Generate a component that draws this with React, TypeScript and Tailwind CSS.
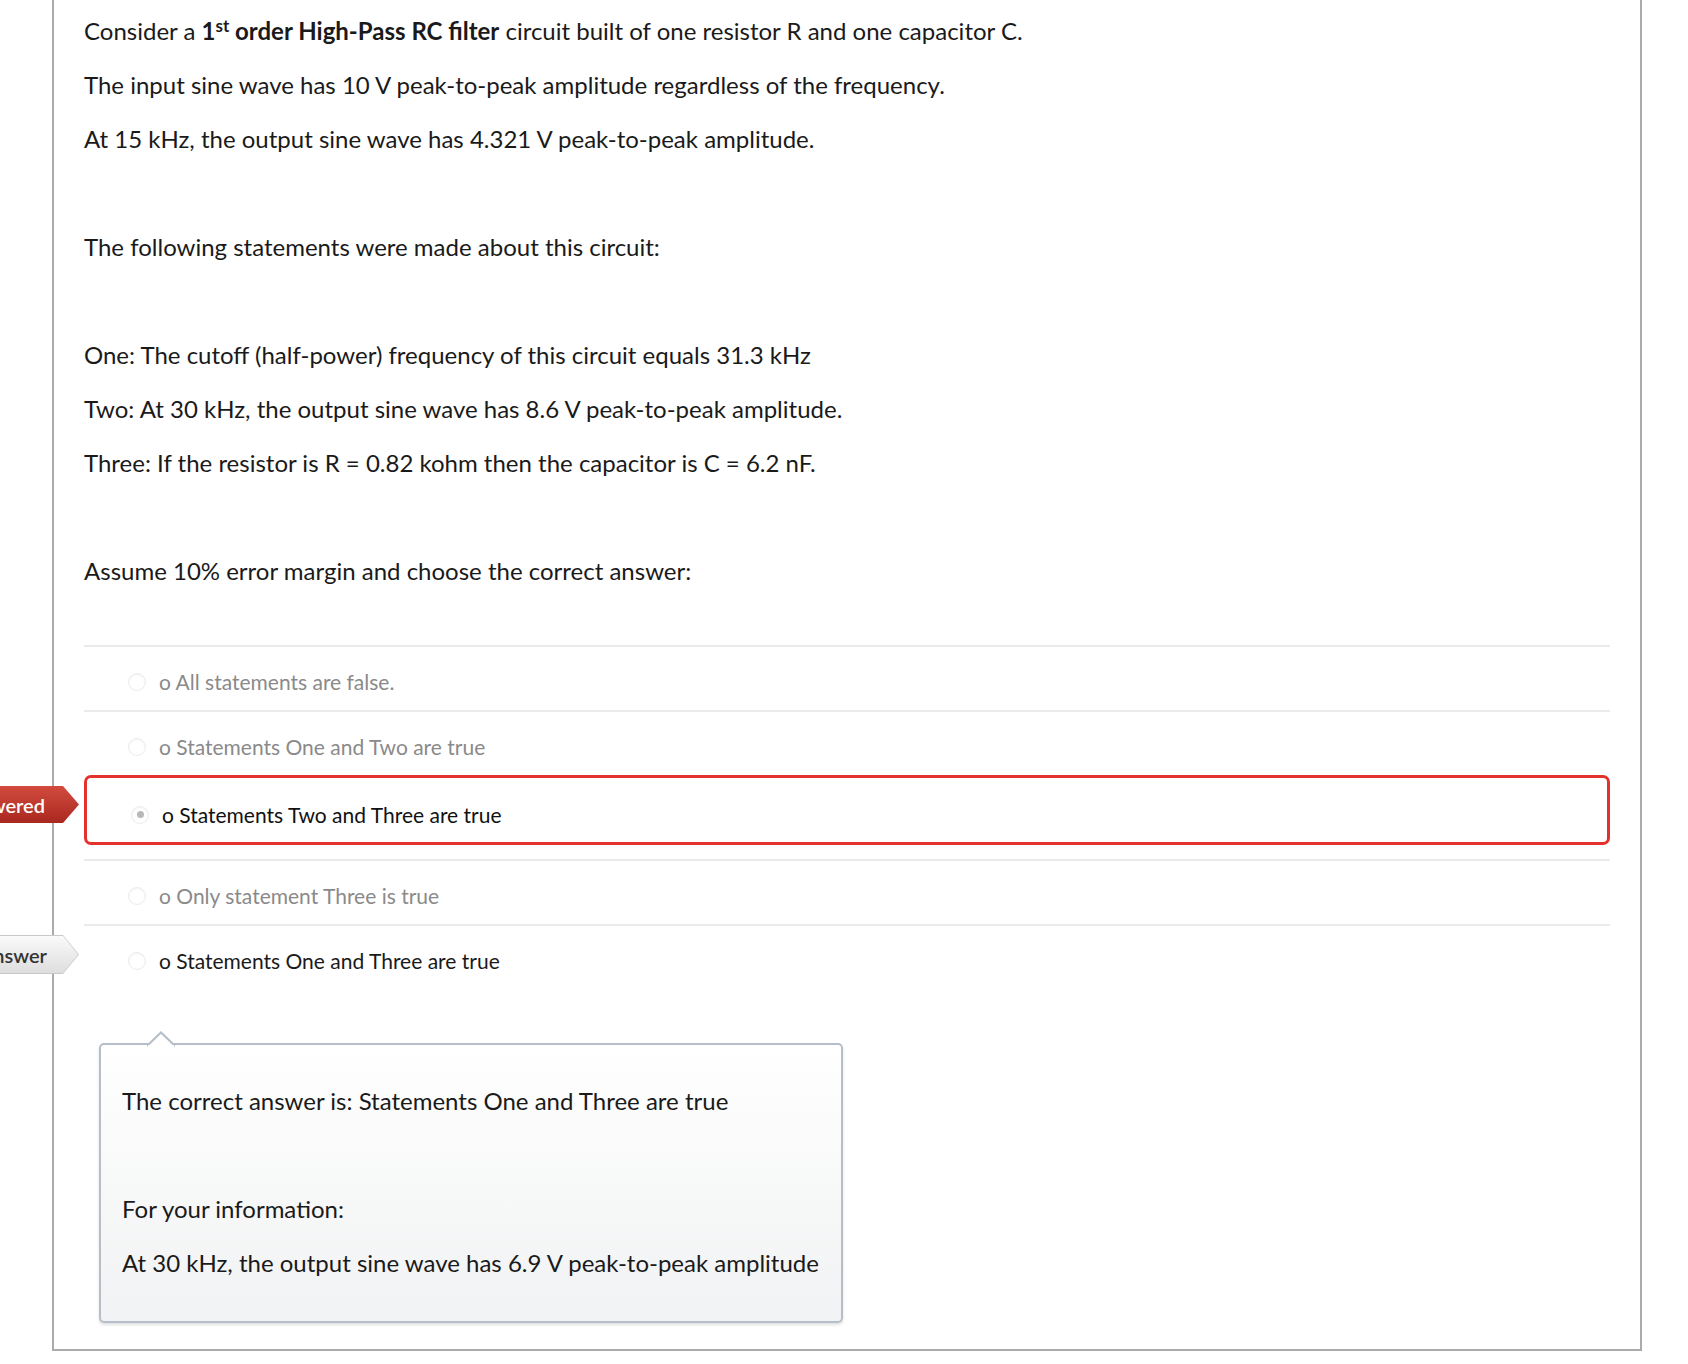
import React from "react";

const options = [
  { label: "o All statements are false.", tone: "text-[#8a8a8a]" },
  { label: "o Statements One and Two are true", tone: "text-[#8a8a8a]" },
  { label: "o Statements Two and Three are true", tone: "text-[#111]", selected: true },
  { label: "o Only statement Three is true", tone: "text-[#8a8a8a]" },
  { label: "o Statements One and Three are true", tone: "text-[#1a1a1a]", tag: "answer" },
];

function Radio({ checked }: { checked?: boolean }) {
  return (
    <span className="flex h-[18px] w-[18px] shrink-0 items-center justify-center rounded-full border border-[#ececec] bg-white shadow-[inset_0_1px_2px_rgba(0,0,0,0.05)]">
      {checked && <span className="h-[7px] w-[7px] rounded-full bg-[#b8b8b8]" />}
    </span>
  );
}

// the labels run off the left edge of the window, as in the page being copied
function AnsweredTag() {
  return (
    <div className="absolute right-[calc(100%+5px)] top-[11px] h-[37px] w-[220px] bg-gradient-to-b from-[#d24a3e] to-[#a9281f] [clip-path:polygon(0_0,calc(100%-16px)_0,100%_50%,calc(100%-16px)_100%,0_100%)]">
      <div className="flex h-full items-center justify-end pr-[34px] text-[20px] font-semibold text-white">Answered</div>
    </div>
  );
}

function AnswerTag() {
  return (
    <div className="absolute right-[calc(100%+5px)] top-[9px] h-[39px] w-[260px] bg-[#c9c9c9] [clip-path:polygon(0_0,calc(100%-16px)_0,100%_50%,calc(100%-16px)_100%,0_100%)]">
      <div className="absolute inset-[1px] bg-gradient-to-b from-[#fafafa] to-[#dedede] [clip-path:polygon(0_0,calc(100%-15px)_0,100%_50%,calc(100%-15px)_100%,0_100%)]">
        <div className="flex h-full items-center justify-end pr-[31px] text-[20px] font-semibold text-[#333]">Correct answer</div>
      </div>
    </div>
  );
}

export default function App() {
  return (
    <div className="min-h-screen bg-white font-['Lato','Liberation_Sans',sans-serif] text-[24px] text-[#1a1a1a]">
      <div className="ml-[52px] w-[1590px] border-x-2 border-b-2 border-[#ababab] px-[30px] pt-[15px] pb-[26px]">
        <p className="mb-[22px] leading-[32px]">
          Consider a{" "}
          <b>
            1<sup className="text-[17px]">st</sup> order High-Pass RC filter
          </b>{" "}
          circuit built of one resistor R and one capacitor C.
        </p>
        <p className="mb-[22px] leading-[32px]">The input sine wave has 10 V peak-to-peak amplitude regardless of the frequency.</p>
        <p className="mb-[22px] leading-[32px]">At 15 kHz, the output sine wave has 4.321 V peak-to-peak amplitude.</p>
        <p className="mb-[22px] h-[32px]" />
        <p className="mb-[22px] leading-[32px]">The following statements were made about this circuit:</p>
        <p className="mb-[22px] h-[32px]" />
        <p className="mb-[22px] leading-[32px]">One: The cutoff (half-power) frequency of this circuit equals 31.3 kHz</p>
        <p className="mb-[22px] leading-[32px]">Two: At 30 kHz, the output sine wave has 8.6 V peak-to-peak amplitude.</p>
        <p className="mb-[22px] leading-[32px]">Three: If the resistor is R = 0.82 kohm then the capacitor is C = 6.2 nF.</p>
        <p className="mb-[22px] h-[32px]" />
        <p className="mb-[58px] leading-[32px]">Assume 10% error margin and choose the correct answer:</p>

        <div className="flex flex-col text-[21px]">
          {options.map((o, i) =>
            o.selected ? (
              <div key={i} className="relative">
                <AnsweredTag />
                <div className="flex h-[70px] items-center gap-[13px] rounded-[7px] border-[3px] border-[#e3322b] pl-[44px] pt-[9px]">
                  <Radio checked />
                  <span className={o.tone}>{o.label}</span>
                </div>
              </div>
            ) : (
              <div key={i} className={`relative border-t-2 border-[#ebebeb] ${i === 3 ? "mt-[14px]" : ""}`}>
                {o.tag === "answer" && <AnswerTag />}
                <div className="flex h-[63px] items-center gap-[13px] pl-[44px] pt-[7px]">
                  <Radio />
                  <span className={o.tone}>{o.label}</span>
                </div>
              </div>
            )
          )}
        </div>

        <div className="relative ml-[15px] mt-[54px] w-[744px] rounded-[5px] border-2 border-[#b6bfc9] bg-gradient-to-b from-white to-[#f1f2f3] pb-[20px] pl-[21px] pt-[40px] shadow-[0_2px_3px_rgba(0,0,0,0.12)]">
          <svg className="absolute left-[46px] top-[-14px]" width="28" height="16" viewBox="0 0 28 16">
            <path d="M0 15 L14 1.5 L28 15" fill="#ffffff" stroke="#b6bfc9" strokeWidth="2" />
            <rect x="1" y="14" width="26" height="3" fill="#ffffff" />
          </svg>
          <p className="mb-[22px] leading-[32px]">The correct answer is: Statements One and Three are true</p>
          <p className="mb-[22px] h-[32px]" />
          <p className="mb-[22px] leading-[32px]">For your information:</p>
          <p className="mb-[22px] leading-[32px]">At 30 kHz, the output sine wave has 6.9 V peak-to-peak amplitude</p>
        </div>
      </div>
    </div>
  );
}
